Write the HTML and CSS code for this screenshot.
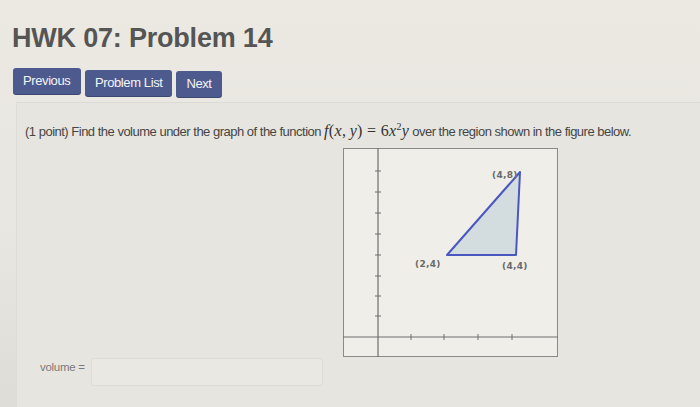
FILE: index.html
```html
<!DOCTYPE html>
<html>
<head>
<meta charset="utf-8">
<link rel="stylesheet" href="styles.css">
</head>
<body>
<div class="page">
  <h1 class="title">HWK 07: Problem 14</h1>
  <div class="nav">
    <a class="btn btn-prev">Previous</a>
    <a class="btn btn-list">Problem List</a>
    <a class="btn btn-next">Next</a>
  </div>
  <div class="problem">
    <p class="statement">(1 point) Find the volume under the graph of the function <span class="math"><i>f</i>(<i>x</i>,&#8201;<i>y</i>) = 6<i>x</i><sup>2</sup><i>y</i></span> over the region shown in the figure below.</p>
    <div class="figure">
      <svg width="216" height="210" viewBox="0 0 216 210">
        <rect x="0.5" y="0.5" width="214" height="208" fill="#f0eee9" stroke="#8a8a88" stroke-width="1"/>
        <line x1="35" y1="0" x2="35" y2="209" stroke="#6e6e6c" stroke-width="1.2"/>
        <line x1="0" y1="189" x2="215" y2="189" stroke="#6e6e6c" stroke-width="1.2"/>
        <g stroke="#6e6e6c" stroke-width="1">
          <line x1="32" y1="23" x2="38" y2="23"/>
          <line x1="32" y1="44" x2="38" y2="44"/>
          <line x1="32" y1="65" x2="38" y2="65"/>
          <line x1="32" y1="86" x2="38" y2="86"/>
          <line x1="32" y1="107" x2="38" y2="107"/>
          <line x1="32" y1="128" x2="38" y2="128"/>
          <line x1="32" y1="148" x2="38" y2="148"/>
          <line x1="32" y1="168" x2="38" y2="168"/>
          <line x1="68" y1="186" x2="68" y2="192"/>
          <line x1="101" y1="186" x2="101" y2="192"/>
          <line x1="135" y1="186" x2="135" y2="192"/>
          <line x1="169" y1="186" x2="169" y2="192"/>
        </g>
        <polygon points="104,107 173,107 177,24" fill="#d3dde0" stroke="#4b57c0" stroke-width="2" stroke-linejoin="round"/>
        <text x="72" y="119" class="lbl">(2,4)</text>
        <text x="159" y="121" class="lbl">(4,4)</text>
        <text x="149" y="30" class="lbl">(4,8)</text>
      </svg>
    </div>
    <div class="answer">
      <label class="ans-label">volume =</label>
      <input class="ans-input" type="text">
    </div>
  </div>
</div>
</body>
</html>
```

FILE: styles.css
```css
html, body {
  margin: 0;
  padding: 0;
}
body {
  width: 700px;
  height: 407px;
  overflow: hidden;
  background: linear-gradient(180deg, #ece9e3 0%, #e8e6e1 60%, #dedcd7 100%);
  font-family: "Liberation Sans", Arial, sans-serif;
}
.page {
  padding: 21px 0 0 12px;
}
.title {
  margin: 0;
  font-size: 27px;
  font-weight: bold;
  color: #555554;
  line-height: 34px;
  letter-spacing: -0.2px;
}
.nav {
  display: flex;
  gap: 4px;
  margin-top: 13px;
  margin-left: 1px;
  align-items: flex-start;
}
.btn {
  display: block;
  background: #4c5a8d;
  color: #f4f4f8;
  font-size: 13px;
  line-height: 26px;
  height: 26px;
  padding: 0 10px;
  border-radius: 3px;
  letter-spacing: -0.4px;
  box-shadow: 0 1px 0 #3c4870;
}
.btn-prev { margin-top: 0; width: 48px; }
.btn-list { margin-top: 2px; }
.btn-next { margin-top: 3px; padding: 0 10px; }
.problem {
  margin-top: 5px;
  margin-left: 4px;
  height: 285px;
  background: #e7e5e0;
  border-top: 1px solid #dcdad5;
  border-left: 1px solid #dedcd7;
  padding: 19px 0 0 8px;
}
.statement {
  margin: 0;
  font-size: 13px;
  color: #454545;
  letter-spacing: -0.5px;
  line-height: 18px;
}
.math {
  font-family: "Liberation Serif", "Times New Roman", serif;
  font-size: 16px;
  letter-spacing: 0.3px;
  color: #333;
}
.math sup {
  font-size: 10px;
  line-height: 0;
}
.figure {
  margin: 7px 0 0 318px;
  height: 210px;
}
.figure svg {
  display: block;
}
.lbl {
  font-family: "DejaVu Sans", sans-serif;
  font-size: 9px;
  font-weight: bold;
  fill: #6a6a6a;
  letter-spacing: 0.3px;
}
.answer {
  display: flex;
  align-items: flex-start;
  gap: 6px;
  margin: 0 0 0 15px;
}
.ans-label {
  font-size: 11.5px;
  color: #7a7a7a;
  letter-spacing: -0.3px;
  margin-top: 3px;
}
.ans-input {
  width: 232px;
  height: 28px;
  box-sizing: border-box;
  border: 1px solid #dddbd6;
  border-radius: 3px;
  background: #eae8e3;
  margin: 0;
}
```
